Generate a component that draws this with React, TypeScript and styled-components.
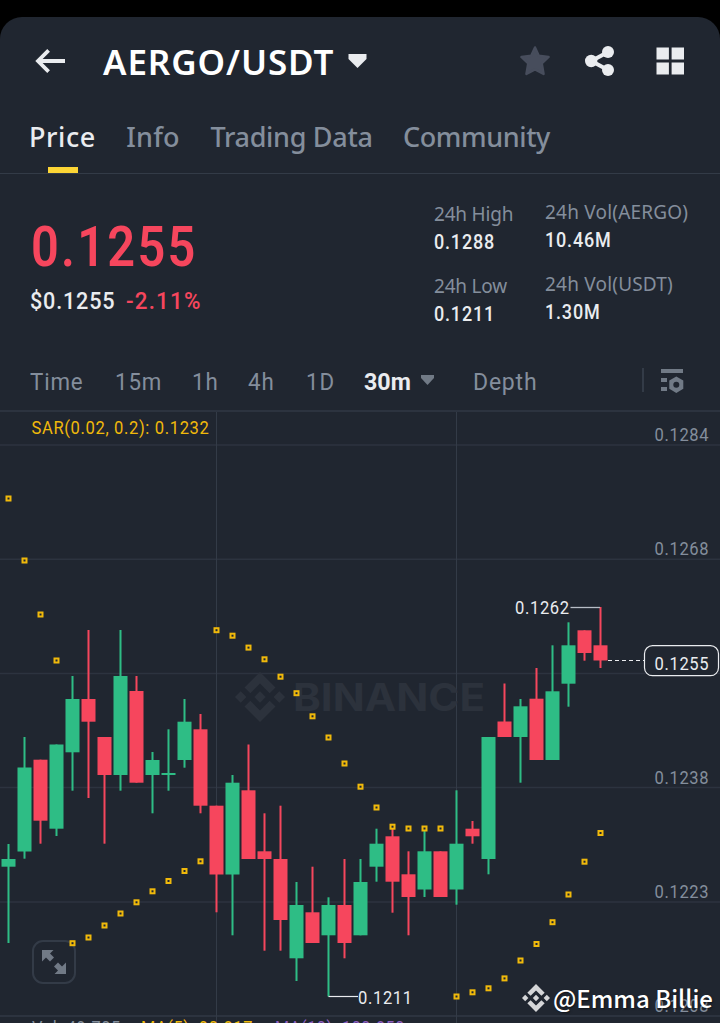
import React from "react";
import styled, { createGlobalStyle } from "styled-components";

const GlobalStyle = createGlobalStyle`
  * { box-sizing: border-box; }
  body { margin: 0; background: #000; font-family: Roboto, "Noto Sans", sans-serif; }
`;

const UP = "#2ebd85";
const DOWN = "#f6465d";
const GREY = "#848e9c";
const LIGHT = "#eaecef";
const SAR = "#f0b90b";

const Screen = styled.div`
  width: 720px;
  height: 1023px;
  padding-top: 17px;
  background: #000;
  overflow: hidden;
`;

const Sheet = styled.main`
  position: relative;
  isolation: isolate;
  height: 1006px;
  display: flex;
  flex-direction: column;
  background: #202630;
  border-radius: 22px 22px 0 0;
  overflow: hidden;
`;

const Header = styled.header`
  height: 90px;
  display: flex;
  align-items: center;
  padding: 0 35px 2px;
`;

const BackIcon = styled.svg`
  width: 30px;
  height: 24px;
  margin-right: 38px;
`;

const Pair = styled.h1`
  width: 230px;
  margin: 2px 15px 0 0;
  font: 600 35px/44px "Noto Sans", sans-serif;
  color: #fff;
  white-space: nowrap;
  letter-spacing: 0.9px;
`;

const Actions = styled.div`
  margin-left: auto;
  display: flex;
  align-items: center;
  gap: 35px;

  > :last-child {
    margin-left: 5px;
  }
`;

const Tabs = styled.nav`
  height: 67px;
  flex: none;
  display: flex;
  gap: 31px;
  padding-left: 30px;
  border-bottom: 1px solid #333b47;
`;

const Tab = styled.div<{ $w: number; $active?: boolean; $ls?: number }>`
  width: ${(p) => p.$w}px;
  display: flex;
  flex-direction: column;
  align-items: center;
  justify-content: space-between;
  padding-top: 12px;
  font: 500 27px/36px "Noto Sans", sans-serif;
  color: ${(p) => (p.$active ? LIGHT : GREY)};
  letter-spacing: ${(p) => p.$ls ?? 0}px;
  white-space: nowrap;
`;

const Underline = styled.i`
  width: 30px;
  height: 6px;
  background: #fcd535;
`;

const Summary = styled.section`
  height: 177px;
  flex: none;
  display: flex;
  padding-left: 31px;
`;

const Quote = styled.div`
  width: 403px;
  padding-top: 40px;
`;

const Squeeze = styled.span<{ $sx?: number; $ls?: number }>`
  display: inline-block;
  white-space: nowrap;
  letter-spacing: ${(p) => p.$ls ?? 0}px;
  transform: scaleX(${(p) => p.$sx ?? 1});
  transform-origin: left;
`;

const LastPrice = styled.div`
  height: 66px;
  font-size: 56px;
  line-height: 66px;
  font-weight: 600;
  color: ${DOWN};
`;

const SubPrice = styled.div`
  display: flex;
  margin: 7px 0 0 -1px;
  font-size: 24px;
  line-height: 28px;
  font-weight: 500;
  color: ${LIGHT};
`;

const FiatPrice = styled.div`
  width: 96px;
`;

const Change = styled.div`
  color: ${DOWN};
`;

const StatColumn = styled.div<{ $w: number; $top: number }>`
  width: ${(p) => p.$w}px;
  padding-top: ${(p) => p.$top}px;
  display: flex;
  flex-direction: column;
  gap: 16px;
`;

const Stat = styled.div`
  height: 56px;
`;

const StatLabel = styled.div<{ $ls: number }>`
  font: 400 19px/28px "Noto Sans", sans-serif;
  letter-spacing: ${(p) => p.$ls}px;
  color: ${GREY};
  white-space: nowrap;
`;

const StatValue = styled.div`
  font-size: 20px;
  line-height: 28px;
  font-weight: 500;
  color: ${LIGHT};
`;

const Intervals = styled.div`
  height: 59px;
  flex: none;
  display: flex;
  align-items: center;
  padding: 3px 36px 0 30px;
`;

const Interval = styled.div<{ $w: number; $active?: boolean }>`
  width: ${(p) => p.$w}px;
  display: flex;
  font-size: 24px;
  font-weight: ${(p) => (p.$active ? 700 : 400)};
  color: ${(p) => (p.$active ? LIGHT : GREY)};
`;

const Separator = styled.i`
  margin-left: auto;
  width: 2px;
  height: 24px;
  margin-bottom: 4px;
  background: #333b47;
`;

const SettingsIcon = styled.svg`
  width: 24px;
  height: 24px;
  margin: 0 0 2px 16px;
`;

const Chart = styled.svg`
  display: block;
  flex: none;
  width: 720px;
  height: 613px;
  font-family: Roboto, sans-serif;
`;

const ExpandButton = styled.button`
  position: absolute;
  z-index: -1;
  left: 32px;
  top: 923px;
  width: 44px;
  height: 44px;
  padding: 0;
  border: 2px solid #333b47;
  border-radius: 11px;
  background: transparent;
`;

const Author = styled.div`
  position: absolute;
  left: 522px;
  top: 963px;
  display: flex;
  align-items: center;
  gap: 3px;
  font: 500 24px/36px "Noto Sans CJK SC", sans-serif;
  color: #fff;
  white-space: nowrap;
  text-shadow: 1px 1px 2px rgba(0, 0, 0, 0.5);
`;

type Candle = [boolean, number, number, number, number];

// rising, body top, body bottom, wick top, wick bottom
const candles: Candle[] = [
  [true, 859, 866.7, 844, 943],
  [true, 767.5, 851.5, 737, 858.7],
  [false, 759.7, 820.7, 759.7, 843.7],
  [true, 744.5, 828.7, 744.5, 836],
  [true, 699, 752.3, 676, 790.7],
  [false, 699, 721.7, 630, 798],
  [false, 737, 775, 737, 843.7],
  [true, 676, 775, 630, 790.7],
  [false, 691, 782.7, 676, 782.7],
  [true, 760, 775, 752, 813.3],
  [true, 773, 775, 729.3, 790.7],
  [true, 721.7, 760, 699, 767.7],
  [false, 729.3, 805.7, 714, 813.3],
  [false, 805.7, 874.5, 805.7, 912.3],
  [true, 782.7, 874.5, 775, 935.3],
  [false, 790.3, 859, 744.5, 859],
  [false, 851.3, 859, 813.3, 950.7],
  [false, 859, 920, 805.7, 950.7],
  [true, 905, 958.3, 882, 981],
  [false, 912.3, 943, 866.7, 943],
  [true, 905, 935.3, 897.3, 996.5],
  [false, 905, 943, 859, 958.3],
  [true, 882, 935.3, 859, 935.3],
  [true, 843.7, 866.7, 828.7, 881.7],
  [false, 836.3, 881.7, 828.7, 912.7],
  [false, 874.3, 897, 851.3, 935.3],
  [true, 851.3, 889.5, 828.7, 897],
  [false, 851.3, 897, 851.3, 897],
  [true, 843.7, 889.5, 790.3, 904.7],
  [false, 828.7, 836.3, 821, 843.7],
  [true, 737, 859, 737, 874.3],
  [false, 721.5, 737, 683.5, 737],
  [true, 706.3, 737, 699, 782.7],
  [false, 698.7, 760, 668, 760],
  [true, 691.3, 760, 645.3, 760],
  [true, 645.3, 683.7, 622.3, 706.7],
  [false, 630.3, 653, 630.3, 660.7],
  [false, 645.3, 660.5, 607, 668],
];

const sar = [
  498.5, 560.5, 614.5, 660.5, 943.2, 937.5, 925.5, 913.5, 902.3, 891.3, 881, 871, 861.3, 630.2, 635.7, 647.6, 659.3,
  676.7, 693.2, 716.3, 737.5, 763.5, 786.7, 807.5, 826.7, 828.5, 828.5, 828.5, 996.5, 992.3, 988.3, 978.4, 960.5, 944,
  922.2, 894.5, 861.7, 833,
];

const gridY = [411, 445, 559.3, 673.5, 787.5, 902, 1016];
const axis: [string, number][] = [
  ["0.1284", 441],
  ["0.1268", 555],
  ["0.1238", 784],
  ["0.1223", 898],
  ["0.1208", 1012],
];

const cx = (i: number) => 8.5 + 16 * i;

const Label = (p: { x: number; y: number; w: number; fill: string; children: string }) => (
  <text x={p.x} y={p.y} fontSize={18} fill={p.fill} letterSpacing={0.7} textLength={p.w} lengthAdjust="spacingAndGlyphs">
    {p.children}
  </text>
);

const Diamonds = ({ size, fill }: { size: number; fill: string }) => (
  <svg width={size} height={size} viewBox="0 0 50 50" fill={fill}>
    <path d="M25 0 40.5 15.5 34.6 21.2 25 11.6 15.4 21.2 9.5 15.5Z" />
    <path d="M25 50 40.5 34.5 34.6 28.8 25 38.4 15.4 28.8 9.5 34.5Z" />
    <path d="M0 25 5.7 19.3 11.4 25 5.7 30.7Z" />
    <path d="M50 25 44.3 19.3 38.6 25 44.3 30.7Z" />
    <path d="M25 19.3 30.7 25 25 30.7 19.3 25Z" />
  </svg>
);

const PriceChart = () => (
  <Chart viewBox="0 410 720 613">
    {gridY.map((y, i) => (
      <path key={y} d={`M0 ${y}H720`} stroke="#2c333f" strokeWidth={i === 0 || i === 6 ? 2 : 1.4} />
    ))}
    <path d="M216.5 412V1023M456.5 412V1023" stroke="#333b47" />
    <g transform="translate(235 672)">
      <Diamonds size={50} fill="#2c323c" />
    </g>
    <text x="293" y="711" fontSize="38" fontWeight="700" fontFamily="Inter, sans-serif" fill="#2c323c" textLength="192" lengthAdjust="spacingAndGlyphs">
      BINANCE
    </text>
    {candles.map(([up, top, bottom, high, low], i) => (
      <g key={i} fill={up ? UP : DOWN}>
        <rect x={cx(i) - 1} y={high} width={2} height={low - high} />
        <rect x={cx(i) - 7} y={top} width={14} height={bottom - top} />
      </g>
    ))}
    {sar.map((y, i) => (
      <rect key={i} x={cx(i) - 2} y={y - 2} width={4} height={4} fill="#202630" stroke={SAR} strokeWidth={2} />
    ))}
    <Label x={31.5} y={434} w={178} fill={SAR}>SAR(0.02, 0.2): 0.1232</Label>
    {axis.map(([t, y]) => (
      <Label key={t} x={654.5} y={y} w={54.7} fill={GREY}>{t}</Label>
    ))}
    <path d="M570.5 607.5H600" stroke="#b7bdc6" strokeWidth={1.3} />
    <Label x={515} y={614} w={54.7} fill={LIGHT}>0.1262</Label>
    <path d="M328.5 996.5H358" stroke={LIGHT} strokeWidth={1.2} />
    <Label x={358} y={1004} w={54.7} fill={LIGHT}>0.1211</Label>
    <path d="M608 660.5H644" stroke={LIGHT} strokeWidth={1.2} strokeDasharray="4 3" />
    <rect x={644.5} y={645.7} width={74} height={30} rx={8} fill="#202630" stroke={LIGHT} strokeWidth={1.2} />
    <Label x={654.5} y={670} w={54.7} fill={LIGHT}>0.1255</Label>
    <Label x={32} y={1034} w={89} fill={GREY}>Vol: 49.705</Label>
    <Label x={141} y={1034} w={112} fill={SAR}>MA(5): 90.817</Label>
    <Label x={275} y={1034} w={130} fill="#8e5fc0">MA(10): 100.850</Label>
  </Chart>
);

const tabs: [string, number, number][] = [
  ["Price", 65, 0.6],
  ["Info", 54, 0.2],
  ["Trading Data", 161, -0.3],
  ["Community", 147, -0.4],
];

const intervals: [string, number][] = [
  ["Time", 85],
  ["15m", 77],
  ["1h", 56],
  ["4h", 58],
  ["1D", 58],
];

const stats = [
  { w: 111, top: 26, ls: -0.2, items: [["24h High", "0.1288"], ["24h Low", "0.1211"]] },
  { w: 150, top: 23.5, ls: 0.2, items: [["24h Vol(AERGO)", "10.46M"], ["24h Vol(USDT)", "1.30M"]] },
];

export default function App() {
  return (
    <Screen>
      <GlobalStyle />
      <Sheet>
        <Header>
          <BackIcon viewBox="0 0 30 24" fill="none" stroke={LIGHT} strokeWidth="3.8">
            <path d="M30 12H3M13.6 1.4 3 12 13.6 22.6" />
          </BackIcon>
          <Pair>AERGO/USDT</Pair>
          <svg width="19" height="14" viewBox="0 0 19 14">
            <path d="M.5 0h18v5L9.5 14 .5 5Z" fill={LIGHT} />
          </svg>
          <Actions>
            <svg width="30" height="30" viewBox="0 0 30 30">
              <path d="M15 1.4 18.8 9.8 28.6 11 21.8 17.4 23.6 28 15 23.4 6.4 28 8.2 17.4 1.4 11 11.2 9.8Z" fill="#474d5c" stroke="#474d5c" strokeWidth="2.4" strokeLinejoin="round" />
            </svg>
            <svg width="30" height="30" viewBox="0 0 30 30" fill={LIGHT}>
              <path d="M6.4 15 23 6M6.4 15 23 24" stroke={LIGHT} strokeWidth="4" />
              <circle cx="6.2" cy="15" r="6.2" />
              <circle cx="23" cy="6" r="6" />
              <circle cx="23" cy="24" r="6" />
            </svg>
            <svg width="30" height="28" viewBox="0 0 30 28" fill={LIGHT}>
              <path d="M1.5 .5h12.4v12H1.5ZM16.6 .5H29v12H16.6ZM1.5 15.5h12.4v12H1.5ZM16.6 15.5H29v12H16.6Z" />
            </svg>
          </Actions>
        </Header>
        <Tabs>
          {tabs.map(([name, w, ls], i) => (
            <Tab key={name} $w={w} $ls={ls} $active={i === 0}>
              {name}
              {i === 0 && <Underline />}
            </Tab>
          ))}
        </Tabs>
        <Summary>
          <Quote>
            <LastPrice>
              <Squeeze $sx={0.87} $ls={2.6}>0.1255</Squeeze>
            </LastPrice>
            <SubPrice>
              <FiatPrice>
                <Squeeze $sx={0.9} $ls={0.9}>$0.1255</Squeeze>
              </FiatPrice>
              <Change>
                <Squeeze $sx={0.93} $ls={1.3}>-2.11%</Squeeze>
              </Change>
            </SubPrice>
          </Quote>
          {stats.map((c) => (
            <StatColumn key={c.w} $w={c.w} $top={c.top}>
              {c.items.map(([label, value]) => (
                <Stat key={label}>
                  <StatLabel $ls={c.ls}>{label}</StatLabel>
                  <StatValue>
                    <Squeeze $sx={0.9} $ls={0.9}>{value}</Squeeze>
                  </StatValue>
                </Stat>
              ))}
            </StatColumn>
          ))}
        </Summary>
        <Intervals>
          {intervals.map(([name, w]) => (
            <Interval key={name} $w={w}>
              <Squeeze $sx={0.93} $ls={0.9}>{name}</Squeeze>
            </Interval>
          ))}
          <Interval $w={57} $active>
            <Squeeze $sx={0.97}>30m</Squeeze>
          </Interval>
          <svg width="52" height="14" viewBox="0 0 52 14">
            <path d="M0 0h13v3L6.5 10 0 3Z" fill="#717a86" />
          </svg>
          <Interval $w={70}>
            <Squeeze $sx={0.96} $ls={0.8}>Depth</Squeeze>
          </Interval>
          <Separator />
          <SettingsIcon viewBox="0 0 24 24" fill="#717a86">
            <path d="M1 0h22v4H1ZM1 9h6v4H1ZM1 18h6v4H1Z" />
            <path fillRule="evenodd" d="M16.3 7.5 23.3 11.4V19.8L16.3 24 9.3 19.8V11.4ZM16.3 12.8a3 3 0 1 0 0 6a3 3 0 1 0 0-6Z" />
          </SettingsIcon>
        </Intervals>
        <PriceChart />
        <ExpandButton>
          <svg width="40" height="40" viewBox="0 0 40 40" fill="#717a86">
            <path d="M8 8H19.5L16 11.6 20 15.6 16 19.4 12 15.6 8 19.5Z" />
            <path d="M32 32H20.5L24 28.4 20 24.4 24 20.6 28 24.4 32 20.5Z" />
          </svg>
        </ExpandButton>
        <Author>
          <Diamonds size={28} fill="#d5d6d8" />
          @Emma Billie
        </Author>
      </Sheet>
    </Screen>
  );
}
